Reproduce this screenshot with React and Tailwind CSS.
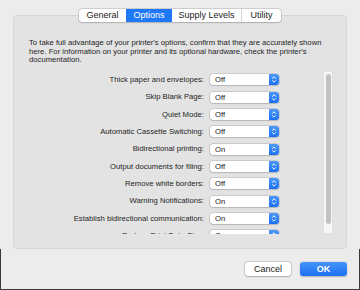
import React from 'react';

const rows = [
  { label: 'Thick paper and envelopes:', value: 'Off' },
  { label: 'Skip Blank Page:', value: 'Off' },
  { label: 'Quiet Mode:', value: 'Off' },
  { label: 'Automatic Cassette Switching:', value: 'Off' },
  { label: 'Bidirectional printing:', value: 'On' },
  { label: 'Output documents for filing:', value: 'Off' },
  { label: 'Remove white borders:', value: 'Off' },
  { label: 'Warning Notifications:', value: 'On' },
  { label: 'Establish bidirectional communication:', value: 'On' },
  { label: 'Reduce Print Data Size:', value: 'On' },
];

const tabs = [
  { name: 'General', w: 'w-[47px]' },
  { name: 'Options', w: 'w-[46px]', active: true },
  { name: 'Supply Levels', w: 'w-[69px]' },
  { name: 'Utility', w: 'w-[40px]' },
];

const Stepper = () => (
  <svg width="6" height="9" viewBox="0 0 6 9" fill="none" stroke="white" strokeWidth="1" strokeLinecap="round" strokeLinejoin="round">
    <path d="M1.5 3.3 L3 1.8 L4.5 3.3" />
    <path d="M1.5 5.7 L3 7.2 L4.5 5.7" />
  </svg>
);

const Popup = ({ value }) => (
  <div className="flex h-[11px] w-[69px] items-stretch rounded-[3px] bg-white shadow-[0_0_0_0.5px_rgba(0,0,0,0.18),0_0.5px_1.5px_rgba(0,0,0,0.2)]">
    <span className="flex-1 pl-[5px] text-[7.7px] leading-[11px] text-[#222]">{value}</span>
    <span className="flex w-[10px] items-center justify-center rounded-r-[3px] bg-gradient-to-b from-[#4c98fa] to-[#1c6ff2]">
      <Stepper />
    </span>
  </div>
);

export default function App() {
  return (
    <div className="flex h-[290px] w-[360px] flex-col bg-[#ececec] font-['Liberation_Sans',Arial,sans-serif] text-[#242424]">
      <div className="px-[13px] pt-[15px]">
        <div className="flex h-[234px] flex-col rounded-[4px] border border-[#d6d6d6] bg-[#e3e3e3]">
          {/* segmented tabs */}
          <div className="mt-[-7px] flex justify-center">
            <div className="flex h-[13px] overflow-hidden rounded-[3px] bg-white shadow-[0_0_0_0.5px_rgba(0,0,0,0.2),0_0.5px_1.5px_rgba(0,0,0,0.15)]">
              {tabs.map((t, i) => (
                <div
                  key={t.name}
                  className={`${t.w} flex items-center justify-center text-[9px] leading-none ${
                    t.active ? 'bg-[#1f78f6] text-white' : 'text-[#222]'
                  } ${i > 0 && !t.active && !tabs[i - 1].active ? 'border-l border-[#d4d4d4]' : ''}`}
                >
                  {t.name}
                </div>
              ))}
            </div>
          </div>

          <p className="mt-[17px] pl-[15px] text-[7.7px] leading-[8.7px]">
            To take full advantage of your printer's options, confirm that they are accurately shown
            <br />
            here. For information on your printer and its optional hardware, check the printer's
            <br />
            documentation.
          </p>

          <div className="mt-[6px] flex h-[163px]">
            <div className="h-full w-[309px] overflow-hidden">
              {rows.map((r) => (
                <div key={r.label} className="flex h-[17.33px] items-center">
                  <span className="w-[190px] text-right text-[7.7px] leading-none">{r.label}</span>
                  <span className="ml-[6px]">
                    <Popup value={r.value} />
                  </span>
                </div>
              ))}
            </div>
            <div className="mt-[1px] h-[161px] w-[10px] border-x border-[#e0e0e0] bg-[#f6f6f6] px-[1.5px] pt-[1.5px]">
              <div className="h-[150px] w-full rounded-full bg-[#c2c2c2]" />
            </div>
          </div>
        </div>
      </div>

      <div className="flex flex-1 items-start justify-end gap-[9px] border-x border-b border-[#3a3a3a] pr-[12px] pt-[13px]">
        <button className="h-[14px] w-[46px] rounded-[3px] bg-white text-[9px] leading-none text-[#222] shadow-[0_0_0_0.5px_rgba(0,0,0,0.2),0_0.5px_1.5px_rgba(0,0,0,0.2)]">
          Cancel
        </button>
        <button className="h-[14px] w-[47px] rounded-[3px] bg-gradient-to-b from-[#4594fa] to-[#1b6ff3] text-[9px] font-bold leading-none text-white shadow-[0_0.5px_1.5px_rgba(0,0,0,0.25)]">
          OK
        </button>
      </div>
    </div>
  );
}
